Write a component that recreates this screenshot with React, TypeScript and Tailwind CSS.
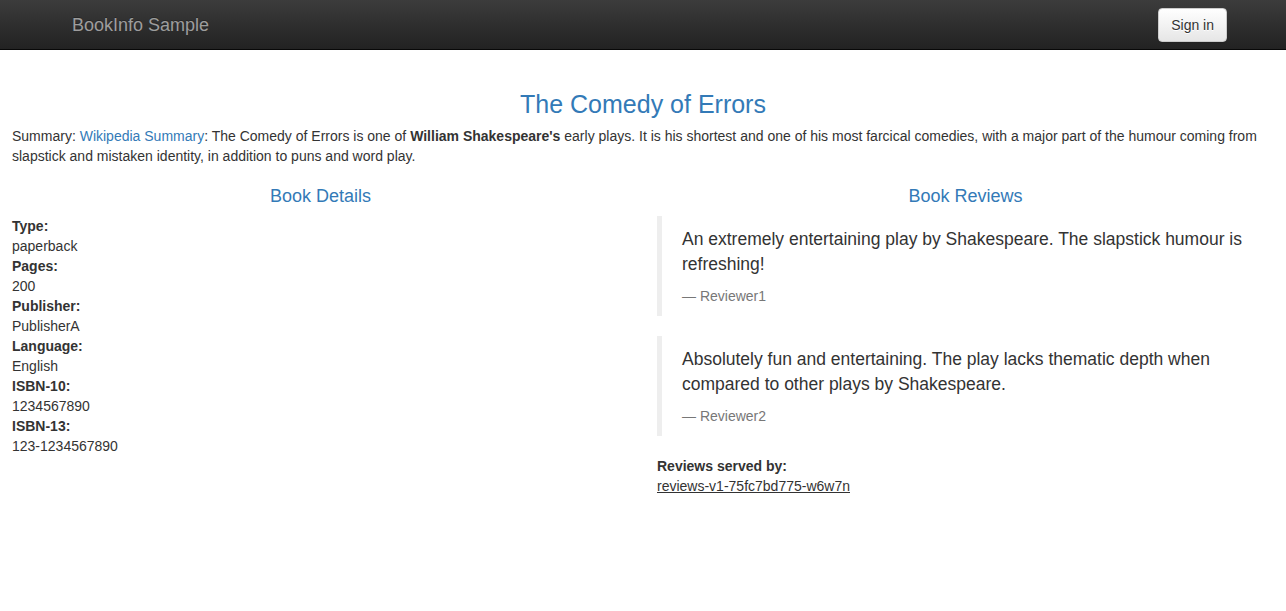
const details = [
  { label: "Type:", value: "paperback" },
  { label: "Pages:", value: "200" },
  { label: "Publisher:", value: "PublisherA" },
  { label: "Language:", value: "English" },
  { label: "ISBN-10:", value: "1234567890" },
  { label: "ISBN-13:", value: "123-1234567890" },
];

const reviews = [
  {
    text: "An extremely entertaining play by Shakespeare. The slapstick humour is refreshing!",
    author: "Reviewer1",
  },
  {
    text: "Absolutely fun and entertaining. The play lacks thematic depth when compared to other plays by Shakespeare.",
    author: "Reviewer2",
  },
];

export default function App() {
  return (
    <div className="min-h-screen bg-white text-[#333] text-[14px] leading-[20px] font-['Liberation_Sans',Arial,sans-serif]">
      <nav className="h-[50px] border-b border-[#080808] bg-gradient-to-b from-[#3c3c3c] to-[#222]">
        <div className="mx-auto flex h-[49px] max-w-[1170px] items-center justify-between pl-[14px] pr-[1px]">
          <span className="text-[18px] text-[#9d9d9d] [text-shadow:0_-1px_0_rgba(0,0,0,0.25)]">BookInfo Sample</span>
          <button className="h-[34px] rounded-[4px] border border-[#ccc] bg-gradient-to-b from-white to-[#e6e6e6] px-3 text-[14px] text-[#333] shadow-[inset_0_1px_0_rgba(255,255,255,0.15),0_1px_1px_rgba(0,0,0,0.075)] [text-shadow:0_1px_0_#fff]">
            Sign in
          </button>
        </div>
      </nav>

      <main className="px-3">
        <h2 className="mt-[41px] text-center text-[25px] leading-[26px] font-medium text-[#337ab7]">
          The Comedy of Errors
        </h2>
        <p className="mt-[9px]">
          Summary: <a className="text-[#337ab7]">Wikipedia Summary</a>: The Comedy of Errors is one of{" "}
          <b>William Shakespeare's</b> early plays. It is his shortest and one of his most farcical comedies, with a
          major part of the humour coming from slapstick and mistaken identity, in addition to puns and word play.
        </p>

        <div className="mt-[20px] grid grid-cols-2 gap-7">
          <section>
            <h4 className="text-center text-[18px] leading-[20px] font-medium text-[#337ab7]">Book Details</h4>
            <dl className="mt-[10px]">
              {details.map((d) => (
                <div key={d.label}>
                  <dt className="font-bold">{d.label}</dt>
                  <dd>{d.value}</dd>
                </div>
              ))}
            </dl>
          </section>

          <section>
            <h4 className="text-center text-[18px] leading-[20px] font-medium text-[#337ab7]">Book Reviews</h4>
            <div className="mt-[10px] flex flex-col gap-5">
              {reviews.map((r) => (
                <blockquote key={r.author} className="border-l-[5px] border-[#eee] px-5 pt-[11px] pb-[10px]">
                  <p className="text-[17.5px] leading-[25px]">{r.text}</p>
                  <footer className="mt-[9px] text-[14px] leading-[20px] text-[#777]">— {r.author}</footer>
                </blockquote>
              ))}
            </div>
            <div className="mt-5">
              <div className="font-bold">Reviews served by:</div>
              <u>reviews-v1-75fc7bd775-w6w7n</u>
            </div>
          </section>
        </div>
      </main>
    </div>
  );
}
